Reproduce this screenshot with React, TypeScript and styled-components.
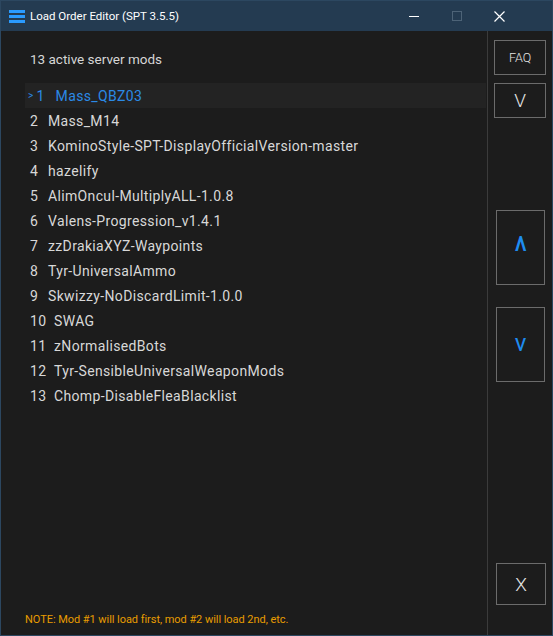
import styled, { createGlobalStyle } from "styled-components";

const GlobalStyle = createGlobalStyle`
  html, body {
    margin: 0;
    padding: 0;
    background: #1c1c1c;
  }
  * {
    box-sizing: border-box;
  }
`;

const Window = styled.div`
  width: 553px;
  height: 636px;
  border: 1px solid #2c4760;
  background: #1c1c1c;
  display: flex;
  flex-direction: column;
  font-family: Roboto, "Liberation Sans", sans-serif;
  overflow: hidden;
`;

const TitleBar = styled.div`
  height: 30px;
  background: #243b51;
  display: flex;
  align-items: center;
  padding-left: 7px;
  padding-right: 31px;
  flex-shrink: 0;
`;

const AppTitle = styled.span`
  color: #ffffff;
  font-family: Roboto, "Liberation Sans", sans-serif;
  font-size: 11.5px;
  margin-left: 5px;
  flex: 1;
`;

const WinButton = styled.div`
  width: 43px;
  height: 30px;
  display: flex;
  align-items: center;
  justify-content: center;
`;

const Body = styled.div`
  flex: 1;
  display: flex;
  min-height: 0;
`;

const ListPanel = styled.div`
  width: 487px;
  border-right: 1px solid #3b3b3b;
  display: flex;
  flex-direction: column;
  padding: 19px 0 0 24px;
`;

const Heading = styled.div`
  color: #d6d6d6;
  font-size: 13.5px;
  padding-left: 5px;
  height: 18px;
  line-height: 18px;
`;

const ModList = styled.ul`
  list-style: none;
  margin: 15px 0 0;
  padding: 0;
  flex: 1;
`;

const ModRow = styled.li<{ $selected?: boolean }>`
  height: 25px;
  display: flex;
  align-items: center;
  margin-right: 1px;
  padding-left: ${(p) => (p.$selected ? "3px" : "5px")};
  background: ${(p) => (p.$selected ? "#232323" : "transparent")};
  color: ${(p) => (p.$selected ? "#2b8ae6" : "#d8d8d8")};
  font-size: 14px;
  letter-spacing: 0.35px;
  white-space: nowrap;
`;

const Caret = styled.span`
  font-size: 10px;
  margin-right: 3px;
`;

const Index = styled.span<{ $width: number }>`
  display: inline-block;
  min-width: ${(p) => p.$width}px;
`;

const Note = styled.div`
  color: #e89c00;
  font-size: 11px;
  letter-spacing: -0.05px;
  padding: 0 0 9px 0;
`;

const SideColumn = styled.div`
  flex: 1;
  display: flex;
  flex-direction: column;
  padding: 9px 0 30px 6px;
`;

const SideButton = styled.button<{ $tall?: boolean; $gap: number; $size: number }>`
  width: ${(p) => (p.$tall ? "49px" : "52px")};
  height: ${(p) => (p.$tall ? "75px" : "35px")};
  margin-top: ${(p) => p.$gap}px;
  margin-left: ${(p) => (p.$tall ? "2px" : "0")};
  background: transparent;
  border: 1px solid #6b6b6b;
  color: #e4e4e4;
  font-family: Roboto, "Liberation Sans", sans-serif;
  font-size: ${(p) => p.$size}px;
  font-weight: 300;
  padding: 0;
  display: flex;
  align-items: center;
  justify-content: center;
  overflow: hidden;
`;

const CloseButton = styled(SideButton)`
  margin-top: auto;
  height: 42px;
  width: 50px;
  margin-left: 2px;
`;

const Arrow = styled.span<{ $up?: boolean }>`
  color: #1e8cf0;
  font-weight: 400;
  font-size: ${(p) => (p.$up ? "27px" : "24px")};
  line-height: 1;
  display: inline-block;
  transform: ${(p) => (p.$up ? "translateY(5px) scale(1.15, 1.6)" : "translateY(-2px)")};
`;

const mods = [
  "Mass_QBZ03",
  "Mass_M14",
  "KominoStyle-SPT-DisplayOfficialVersion-master",
  "hazelify",
  "AlimOncul-MultiplyALL-1.0.8",
  "Valens-Progression_v1.4.1",
  "zzDrakiaXYZ-Waypoints",
  "Tyr-UniversalAmmo",
  "Skwizzy-NoDiscardLimit-1.0.0",
  "SWAG",
  "zNormalisedBots",
  "Tyr-SensibleUniversalWeaponMods",
  "Chomp-DisableFleaBlacklist",
];

function MenuIcon() {
  return (
    <svg width="17" height="14" viewBox="0 0 17 14">
      <rect x="1" y="1" width="16" height="3" fill="#2a9bff" />
      <rect x="1" y="6" width="16" height="3" fill="#2a9bff" />
      <rect x="1" y="11" width="16" height="3" fill="#2a9bff" />
    </svg>
  );
}

export default function App() {
  return (
    <>
      <GlobalStyle />
      <Window>
        <TitleBar>
          <MenuIcon />
          <AppTitle>Load Order Editor (SPT 3.5.5)</AppTitle>
          <WinButton>
            <svg width="10" height="10" viewBox="0 0 10 10">
              <line x1="0" y1="5.5" x2="10" y2="5.5" stroke="#ffffff" strokeWidth="1" />
            </svg>
          </WinButton>
          <WinButton>
            <svg width="10" height="10" viewBox="0 0 10 10">
              <rect x="0.5" y="0.5" width="9" height="9" fill="none" stroke="#4d6377" strokeWidth="1" />
            </svg>
          </WinButton>
          <WinButton>
            <svg width="11" height="11" viewBox="0 0 11 11">
              <path d="M0.5 0.5 L10.5 10.5 M10.5 0.5 L0.5 10.5" stroke="#ffffff" strokeWidth="1.2" />
            </svg>
          </WinButton>
        </TitleBar>
        <Body>
          <ListPanel>
            <Heading>13 active server mods</Heading>
            <ModList>
              {mods.map((name, i) => (
                <ModRow key={name} $selected={i === 0}>
                  {i === 0 && <Caret>&gt;</Caret>}
                  <Index $width={i === 0 ? 19 : i >= 9 ? 24 : 18}>{i + 1}</Index>
                  {name}
                </ModRow>
              ))}
            </ModList>
            <Note>NOTE: Mod #1 will load first, mod #2 will load 2nd, etc.</Note>
          </ListPanel>
          <SideColumn>
            <SideButton $gap={0} $size={12.5}>FAQ</SideButton>
            <SideButton $gap={8} $size={19}>V</SideButton>
            <SideButton $tall $gap={92} $size={18}>
              <Arrow $up>^</Arrow>
            </SideButton>
            <SideButton $tall $gap={22} $size={18}>
              <Arrow>v</Arrow>
            </SideButton>
            <CloseButton $gap={0} $size={19}>X</CloseButton>
          </SideColumn>
        </Body>
      </Window>
    </>
  );
}
